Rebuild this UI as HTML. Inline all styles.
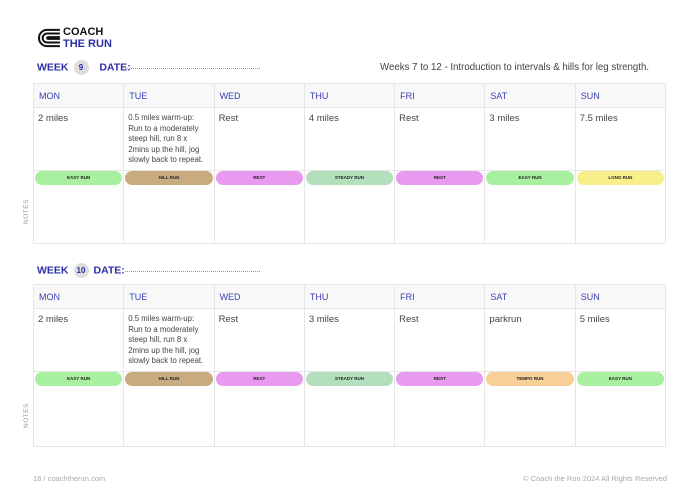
<!DOCTYPE html><html><head><style>
*{margin:0;padding:0;box-sizing:border-box}
body{width:700px;height:495px;background:#fff;font-family:"Liberation Sans",sans-serif;position:relative;overflow:hidden;color:#333}
.abs{position:absolute}
.wk{font-size:10.5px;font-weight:bold;color:#2b2fa8;}
.badge{display:inline-block;width:15px;height:15px;border-radius:8px;background:#ddd;color:#2b2fa8;font-size:8px;text-align:center;line-height:15px;vertical-align:middle;margin:0 5px}
.line{border-bottom:1px dotted #999;width:135px;height:1px}
table{position:absolute;left:33px;width:633px;border-collapse:collapse;table-layout:fixed}
td{border:1px solid #e6e6e6;vertical-align:top;font-size:9px;padding:0 4px}
.h td{background:#f8f8f8;height:24px;color:#3a3fb0;font-size:9px;vertical-align:middle;padding-left:5px}
.t td{height:63px;padding-top:5px;font-size:9.5px;color:#444;line-height:11.5px}
.t td.s{font-size:7.8px;line-height:10.5px;padding-right:8px}
.p td{height:15px;padding:0 1px;border-top:none;border-bottom:none}
.p div{height:14px;border-radius:7px;font-size:4.5px;font-weight:bold;text-align:center;line-height:14px;color:#222}
.n td{height:58px;border-top:none}
.n2 td{height:60px;border-top:none}
.g{background:#a8f0a0}.b{background:#c9ab80}.m{background:#e79af0}.sg{background:#b4dfbc}.y{background:#f9ef8a}.o{background:#f9cf98}
.notes{position:absolute;left:22px;font-size:6.5px;color:#999;transform:rotate(-90deg);letter-spacing:.5px}
</style></head><body>
<svg class="abs" style="left:37px;top:28px" width="24" height="20" viewBox="0 0 26 22"><g fill="none" stroke="#111" stroke-width="2.2"><path d="M25 2H11a9 9 0 0 0 0 18h14"/><path d="M25 6H11a5 5 0 0 0 0 10h14"/><path d="M25 10H12a1 1 0 0 0 0 2h13"/></g></svg>
<div class="abs" style="left:63px;top:27px;font-size:11px;font-weight:bold;line-height:11.5px;color:#111">COACH<br><span style="color:#2b2fa8">THE RUN</span></div>
<div class="abs wk" style="left:37px;top:60px">WEEK<span class="badge">9</span>&nbsp; DATE:</div>
<div class="abs line" style="left:125px;top:68px"></div>
<div class="abs" style="left:380px;top:62px;font-size:9.7px;color:#444">Weeks 7 to 12 - Introduction to intervals &amp; hills for leg strength.</div>
<table style="top:83px">
<tr class="h"><td>MON</td><td>TUE</td><td>WED</td><td>THU</td><td>FRI</td><td>SAT</td><td>SUN</td></tr>
<tr class="t"><td>2 miles</td><td class="s">0.5 miles warm-up: Run to a moderately steep hill, run 8 x 2mins up the hill, jog slowly back to repeat.</td><td>Rest</td><td>4 miles</td><td>Rest</td><td>3 miles</td><td>7.5 miles</td></tr>
<tr class="p"><td><div class="g">EASY RUN</div></td><td><div class="b">HILL RUN</div></td><td><div class="m">REST</div></td><td><div class="sg">STEADY RUN</div></td><td><div class="m">REST</div></td><td><div class="g">EASY RUN</div></td><td><div class="y">LONG RUN</div></td></tr>
<tr class="n"><td></td><td></td><td></td><td></td><td></td><td></td><td></td></tr>
</table>
<div class="notes" style="top:208px;left:14px">NOTES</div>
<div class="abs wk" style="left:37px;top:263px">WEEK<span class="badge">10</span>DATE:</div>
<div class="abs line" style="left:125px;top:271px"></div>
<table style="top:284px">
<tr class="h"><td>MON</td><td>TUE</td><td>WED</td><td>THU</td><td>FRI</td><td>SAT</td><td>SUN</td></tr>
<tr class="t"><td>2 miles</td><td class="s">0.5 miles warm-up: Run to a moderately steep hill, run 8 x 2mins up the hill, jog slowly back to repeat.</td><td>Rest</td><td>3 miles</td><td>Rest</td><td>parkrun</td><td>5 miles</td></tr>
<tr class="p"><td><div class="g">EASY RUN</div></td><td><div class="b">HILL RUN</div></td><td><div class="m">REST</div></td><td><div class="sg">STEADY RUN</div></td><td><div class="m">REST</div></td><td><div class="o">TEMPO RUN</div></td><td><div class="g">EASY RUN</div></td></tr>
<tr class="n2"><td></td><td></td><td></td><td></td><td></td><td></td><td></td></tr>
</table>
<div class="notes" style="top:412px;left:14px">NOTES</div>
<div class="abs" style="left:33px;top:474px;font-size:7.5px;color:#aaa">18 / coachtherun.com</div>
<div class="abs" style="right:33px;top:474px;font-size:7.5px;color:#aaa">© Coach the Run 2024 All Rights Reserved</div>
</body></html>
